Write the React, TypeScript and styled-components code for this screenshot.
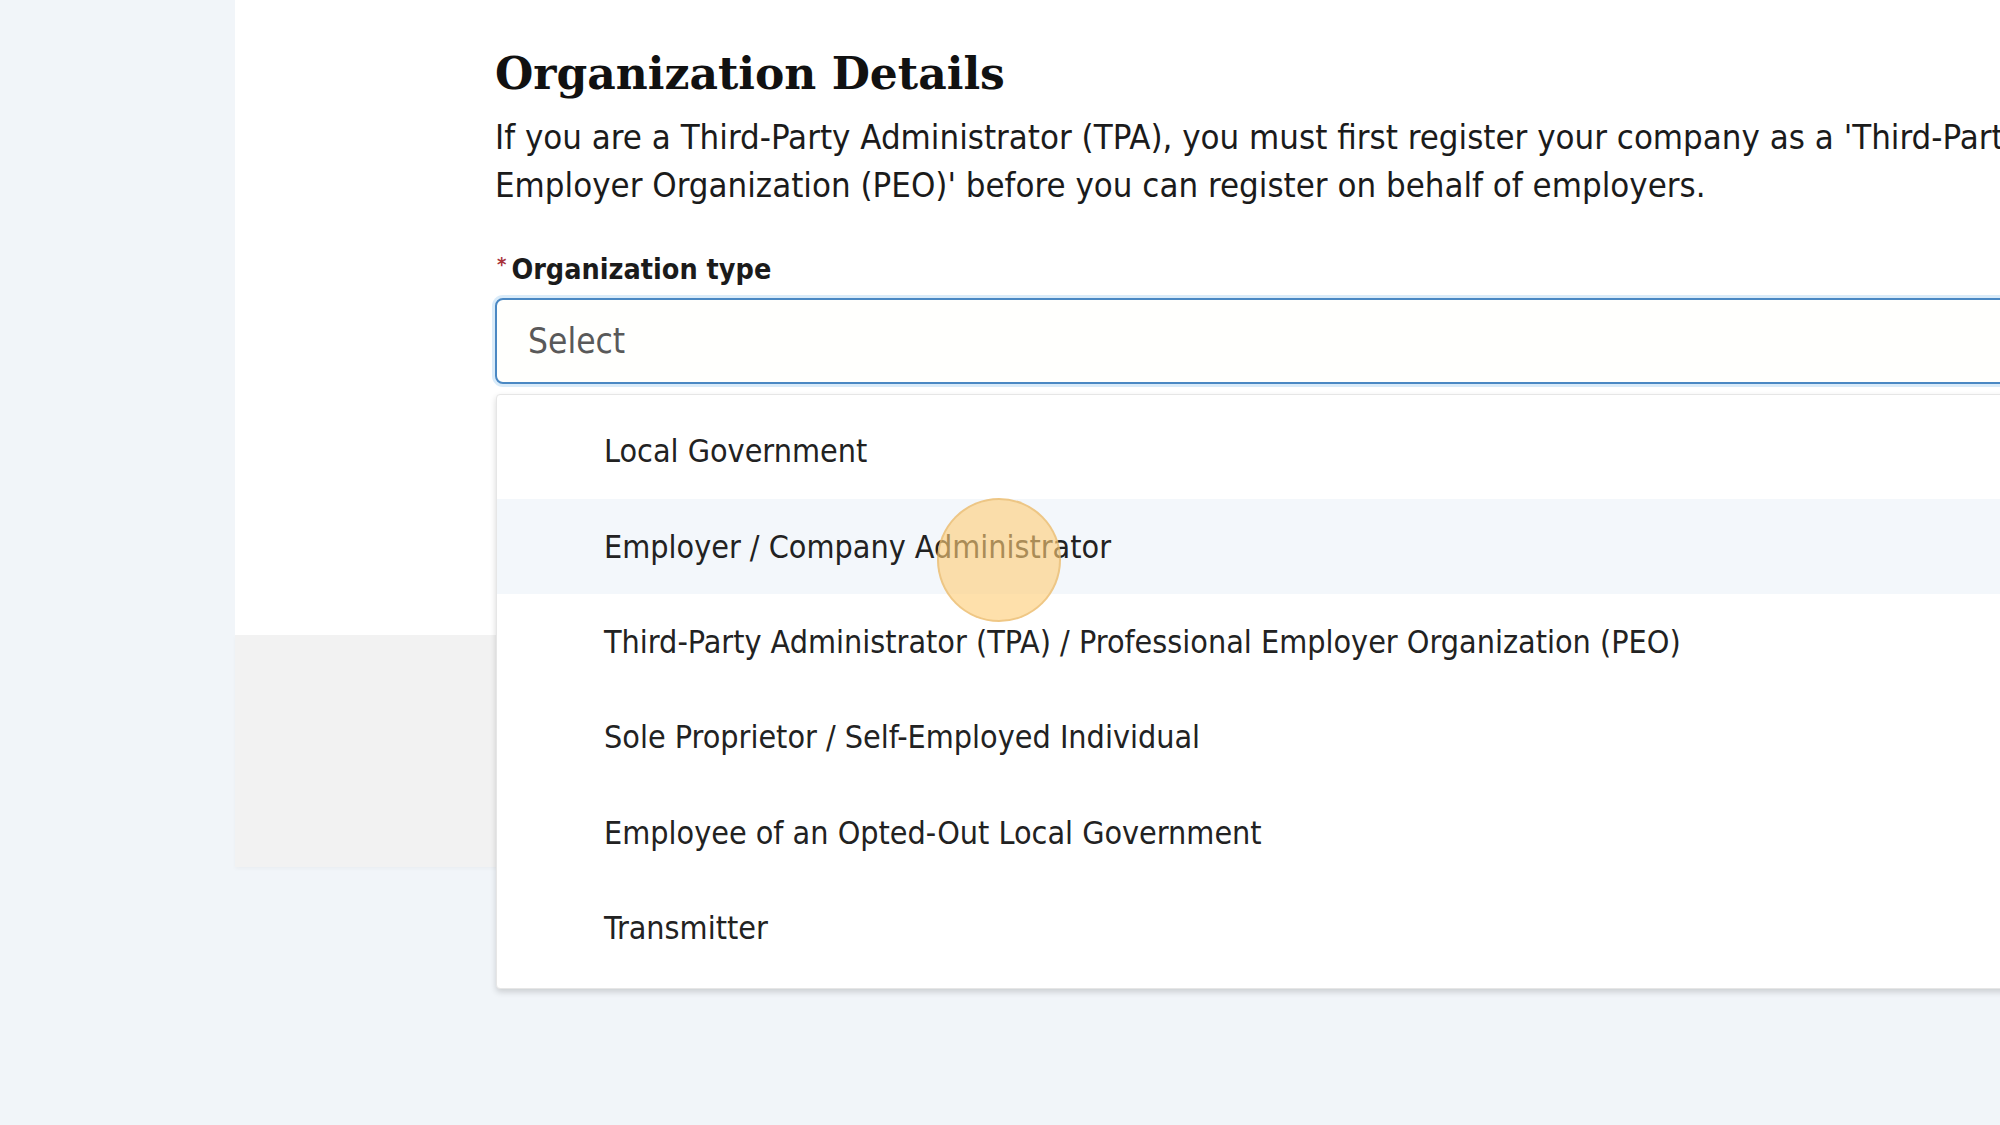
import React from "react";
import styled, { createGlobalStyle } from "styled-components";

const GlobalStyle = createGlobalStyle`
  html, body {
    margin: 0;
    padding: 0;
    overflow: hidden;
    background: #f1f5f9;
  }
`;

const options = [
  "Local Government",
  "Employer / Company Administrator",
  "Third-Party Administrator (TPA) / Professional Employer Organization (PEO)",
  "Sole Proprietor / Self-Employed Individual",
  "Employee of an Opted-Out Local Government",
  "Transmitter",
];

const App = () => {
  const active = 1;

  return (
    <Page>
      <GlobalStyle />
      <Card>
        <Title>Organization Details</Title>
        <Intro>
          If you are a Third-Party Administrator (TPA), you must first register your company as a 'Third-Party
          Administrator (TPA) / Professional
          <br />
          Employer Organization (PEO)' before you can register on behalf of employers.
        </Intro>
        <Field>
          <Label>
            <Required>*</Required>Organization type
          </Label>
          <SelectBox>
            <Placeholder>Select</Placeholder>
          </SelectBox>
          <Menu>
            {options.map((opt, i) => (
              <Option key={opt} active={i === active}>
                {opt}
              </Option>
            ))}
          </Menu>
        </Field>
      </Card>
      <Footer />
      <Cursor />
    </Page>
  );
};

export default App;

const Page = styled.div`
  position: relative;
  display: flex;
  flex-direction: column;
  height: 1125px;
  padding-left: 235px;
  background: #f1f5f9;
  font-family: "DejaVu Sans Condensed", "DejaVu Sans", sans-serif;
  color: #1b1b1b;
`;

const Card = styled.section`
  box-sizing: border-box;
  width: 1800px;
  height: 635px;
  padding: 48px 0 0 260px;
  background: #ffffff;
  position: relative;
  z-index: 1;
`;

const Title = styled.h1`
  margin: 0;
  font-family: "DejaVu Serif", "Liberation Serif", serif;
  font-weight: 700;
  font-size: 44px;
  line-height: 52px;
  color: #111;
`;

const Intro = styled.p`
  margin: 12.5px 0 0;
  font-size: 34.5px;
  line-height: 48.5px;
  white-space: nowrap;
  color: #1b1b1b;
`;

const Field = styled.div`
  position: relative;
  margin-top: 40px;
  width: 1600px;
`;

const Label = styled.div`
  display: flex;
  align-items: flex-start;
  font-size: 28.5px;
  font-weight: 600;
  line-height: 40px;
  color: #1b1b1b;
`;

const Required = styled.span`
  color: #a8323a;
  font-size: 20px;
  line-height: 28px;
  margin: 0 5px 0 2px;
`;

const SelectBox = styled.div`
  box-sizing: border-box;
  display: flex;
  align-items: center;
  height: 86px;
  margin-top: 8px;
  padding-left: 31px;
  border: 2px solid #4a88c3;
  border-radius: 8px;
  background: #fffffd;
  box-shadow: 0 0 0 3px rgba(130, 190, 235, 0.3);
`;

const Placeholder = styled.span`
  font-size: 35px;
  color: #595959;
`;

const Menu = styled.ul`
  position: absolute;
  top: calc(100% + 10px);
  left: 1px;
  width: 1700px;
  margin: 0;
  padding: 9px 0 12px;
  list-style: none;
  background: #fff;
  border: 1px solid #e6e6e6;
  border-radius: 4px;
  box-shadow: 0 3px 6px rgba(0, 0, 0, 0.16);
  z-index: 5;
`;

const Option = styled.li<{ active?: boolean }>`
  display: flex;
  align-items: center;
  height: 95.4px;
  padding-left: 107px;
  font-size: 32px;
  color: #222;
  background: ${({ active }) => (active ? "#f3f7fb" : "transparent")};
`;

const Footer = styled.div`
  width: 1800px;
  height: 232px;
  background: #f2f2f2;
  box-shadow: 0 2px 4px rgba(0, 0, 0, 0.03);
`;

const Cursor = styled.div`
  position: absolute;
  left: 937px;
  top: 498px;
  width: 124px;
  height: 124px;
  border-radius: 50%;
  background: rgba(253, 205, 120, 0.62);
  border: 2px solid rgba(225, 175, 95, 0.5);
  box-sizing: border-box;
  z-index: 10;
  pointer-events: none;
`;
